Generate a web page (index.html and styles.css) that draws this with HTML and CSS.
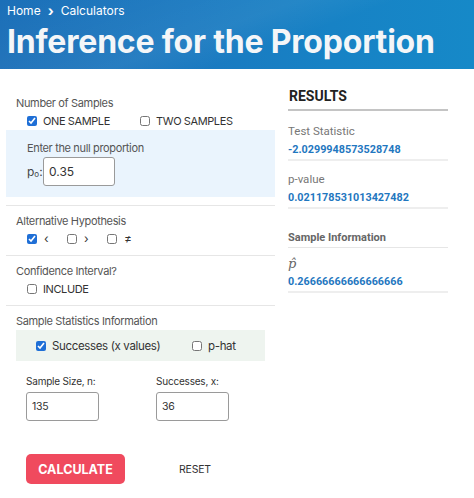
FILE: index.html
```html
<!DOCTYPE html>
<html>
<head>
<meta charset="utf-8">
<link rel="stylesheet" href="styles.css">
</head>
<body>
<header class="hero">
  <div class="crumbs"><span>Home</span><span class="sep">&#8250;</span><span>Calculators</span></div>
  <h1 class="title">Inference for the Proportion</h1>
</header>
<main class="main">
  <section class="form">
    <div class="group">
      <div class="label">Number of Samples</div>
      <div class="checks">
        <label class="chk upper"><input type="checkbox" checked>ONE SAMPLE</label>
        <label class="chk upper"><input type="checkbox">TWO SAMPLES</label>
      </div>
    </div>
    <div class="nullbox">
      <div class="label">Enter the null proportion</div>
      <div class="prow"><span class="plabel">p<sub>o</sub>:</span><input class="field" type="text" value="0.35"></div>
    </div>
    <div class="group bordered">
      <div class="label">Alternative Hypothesis</div>
      <div class="checks alt">
        <label class="chk sym"><input type="checkbox" checked>&lsaquo;</label>
        <label class="chk sym"><input type="checkbox">&rsaquo;</label>
        <label class="chk sym"><input type="checkbox">&ne;</label>
      </div>
    </div>
    <div class="group bordered">
      <div class="label">Confidence Interval?</div>
      <div class="checks">
        <label class="chk upper"><input type="checkbox">INCLUDE</label>
      </div>
    </div>
    <div class="group bordered last">
      <div class="label">Sample Statistics Information</div>
      <div class="statbox">
        <label class="chk big"><input type="checkbox" checked>Successes (x values)</label>
        <label class="chk big"><input type="checkbox">p-hat</label>
      </div>
      <div class="inputs">
        <div class="inp">
          <div class="small">Sample Size, n:</div>
          <input class="field" type="text" value="135">
        </div>
        <div class="inp">
          <div class="small">Successes, x:</div>
          <input class="field" type="text" value="36">
        </div>
      </div>
      <div class="actions">
        <button class="calc">CALCULATE</button>
        <button class="reset">RESET</button>
      </div>
    </div>
  </section>
  <aside class="results">
    <h2 class="rhead">RESULTS</h2>
    <div class="ritem first">
      <div class="rlabel">Test Statistic</div>
      <div class="rvalue">-2.0299948573528748</div>
    </div>
    <div class="ritem">
      <div class="rlabel">p-value</div>
      <div class="rvalue">0.021178531013427482</div>
    </div>
    <div class="rsub">Sample Information</div>
    <div class="ritem phat">
      <div class="rlabel math">p&#770;</div>
      <div class="rvalue">0.26666666666666666</div>
    </div>
  </aside>
</main>
</body>
</html>
```

FILE: styles.css
```css
* { box-sizing: border-box; }
body {
  margin: 0;
  font-family: Inter, "Noto Sans", sans-serif;
  color: #333;
  background: #fff;
  width: 474px;
  height: 498px;
  overflow: hidden;
}
.hero {
  height: 69px;
  padding: 3px 0 0 7px;
  background:
    linear-gradient(160deg, rgba(255,255,255,0) 0%, rgba(255,255,255,0.06) 45%, rgba(255,255,255,0) 60%),
    linear-gradient(90deg, #1b6fb8 0%, #1a79c0 40%, #1782c5 70%, #1689c8 100%);
  color: #fff;
}
.crumbs {
  font-size: 12px;
  line-height: 16px;
  display: flex;
  gap: 7px;
  align-items: center;
}
.crumbs .sep { font-size: 14px; font-weight: 700; }
.title {
  margin: 3px 0 0;
  font-size: 32px;
  line-height: 40px;
  font-weight: 700;
  letter-spacing: -0.2px;
  color: #f4f6f8;
}
.main {
  display: flex;
  gap: 13px;
  padding-left: 6px;
}
.form { width: 269px; flex: none; }
.group { padding: 26px 10px 0; }
.group.bordered {
  border-top: 1px solid #e6e6e6;
  padding-top: 7px;
  padding-bottom: 8px;
}
.group:first-child { padding-bottom: 1px; }
.label {
  font-size: 11px;
  line-height: 16px;
  letter-spacing: -0.35px;
  color: #555;
}
.checks {
  display: flex;
  margin-top: 2px;
  padding-left: 11px;
  height: 16px;
  align-items: center;
}
.chk {
  display: flex;
  align-items: center;
  font-size: 11px;
  line-height: 16px;
  letter-spacing: -0.4px;
  color: #333;
}
.chk input {
  width: 10px;
  height: 10px;
  margin: 0 6px 0 0;
  accent-color: #1f6fd6;
}
.chk.upper:first-child { width: 113px; }
.chk.sym { width: 40px; font-size: 12px; letter-spacing: 0; }
.chk.sym input { margin-right: 7px; }
.nullbox {
  background: #eaf4fd;
  height: 67px;
  padding: 10px 21px 0;
  margin-bottom: 8px;
}
.prow {
  display: flex;
  align-items: center;
  margin-top: 1px;
}
.plabel {
  font-size: 12px;
  color: #444;
  width: 16px;
}
.plabel sub { font-size: 8px; vertical-align: -1px; }
.field {
  width: 72px;
  height: 29px;
  border: 1px solid #9a9a9a;
  border-radius: 3px;
  padding: 0 5px;
  font-family: Inter, sans-serif;
  font-size: 12px;
  color: #333;
  background: #fff;
}
.statbox {
  display: flex;
  align-items: center;
  background: #eef4ef;
  height: 31px;
  margin-top: 1px;
  padding-left: 20px;
}
.chk.big { font-size: 11.5px; letter-spacing: -0.35px; }
.chk.big:first-child { width: 156px; }
.chk.big input { margin-right: 6px; }
.inputs {
  display: flex;
  padding-left: 10px;
  margin-top: 13px;
}
.inp { width: 130px; flex: none; }
.small {
  font-size: 10px;
  line-height: 14px;
  letter-spacing: -0.2px;
  color: #333;
  margin-bottom: 4px;
}
.inputs .field { width: 73px; font-size: 10.5px; letter-spacing: -0.2px; }
.actions {
  display: flex;
  align-items: center;
  padding-left: 10px;
  margin-top: 33px;
}
.calc {
  width: 99px;
  height: 30px;
  border: none;
  border-radius: 5px;
  background: #f04a5e;
  color: #fff;
  font-family: Inter, sans-serif;
  font-weight: 700;
  font-size: 12.5px;
}
.reset {
  margin-left: 40px;
  border: none;
  background: none;
  font-family: Inter, sans-serif;
  font-size: 10.5px;
  letter-spacing: -0.2px;
  color: #333;
  padding: 0 14px;
}
.results {
  width: 160px;
  flex: none;
  font-family: Roboto, sans-serif;
}
.rhead {
  margin: 18px 0 0;
  padding-left: 1px;
  font-size: 14px;
  line-height: 18px;
  font-weight: 700;
  color: #222;
  padding-bottom: 4px;
  border-bottom: 2px solid #c4c4c4;
}
.ritem {
  padding: 11px 0 2px;
  border-bottom: 2px solid #eeeeee;
}
.ritem.first { padding-top: 13px; }
.rlabel {
  font-size: 11.5px;
  line-height: 14px;
  color: #777;
  margin-bottom: 4px;
}
.rvalue {
  font-size: 10.8px;
  line-height: 15px;
  font-weight: 700;
  color: #1f77c0;
}
.rsub {
  margin-top: 22px;
  font-size: 11px;
  line-height: 14px;
  font-weight: 700;
  color: #666;
  padding-bottom: 2px;
  border-bottom: 1px solid #e6e6e6;
}
.phat { padding-top: 8px; }
.math {
  font-family: "DejaVu Serif", "Liberation Serif", serif;
  font-style: italic;
  font-size: 13px;
  line-height: 16px;
  color: #666;
  margin-bottom: 2px;
}
```
